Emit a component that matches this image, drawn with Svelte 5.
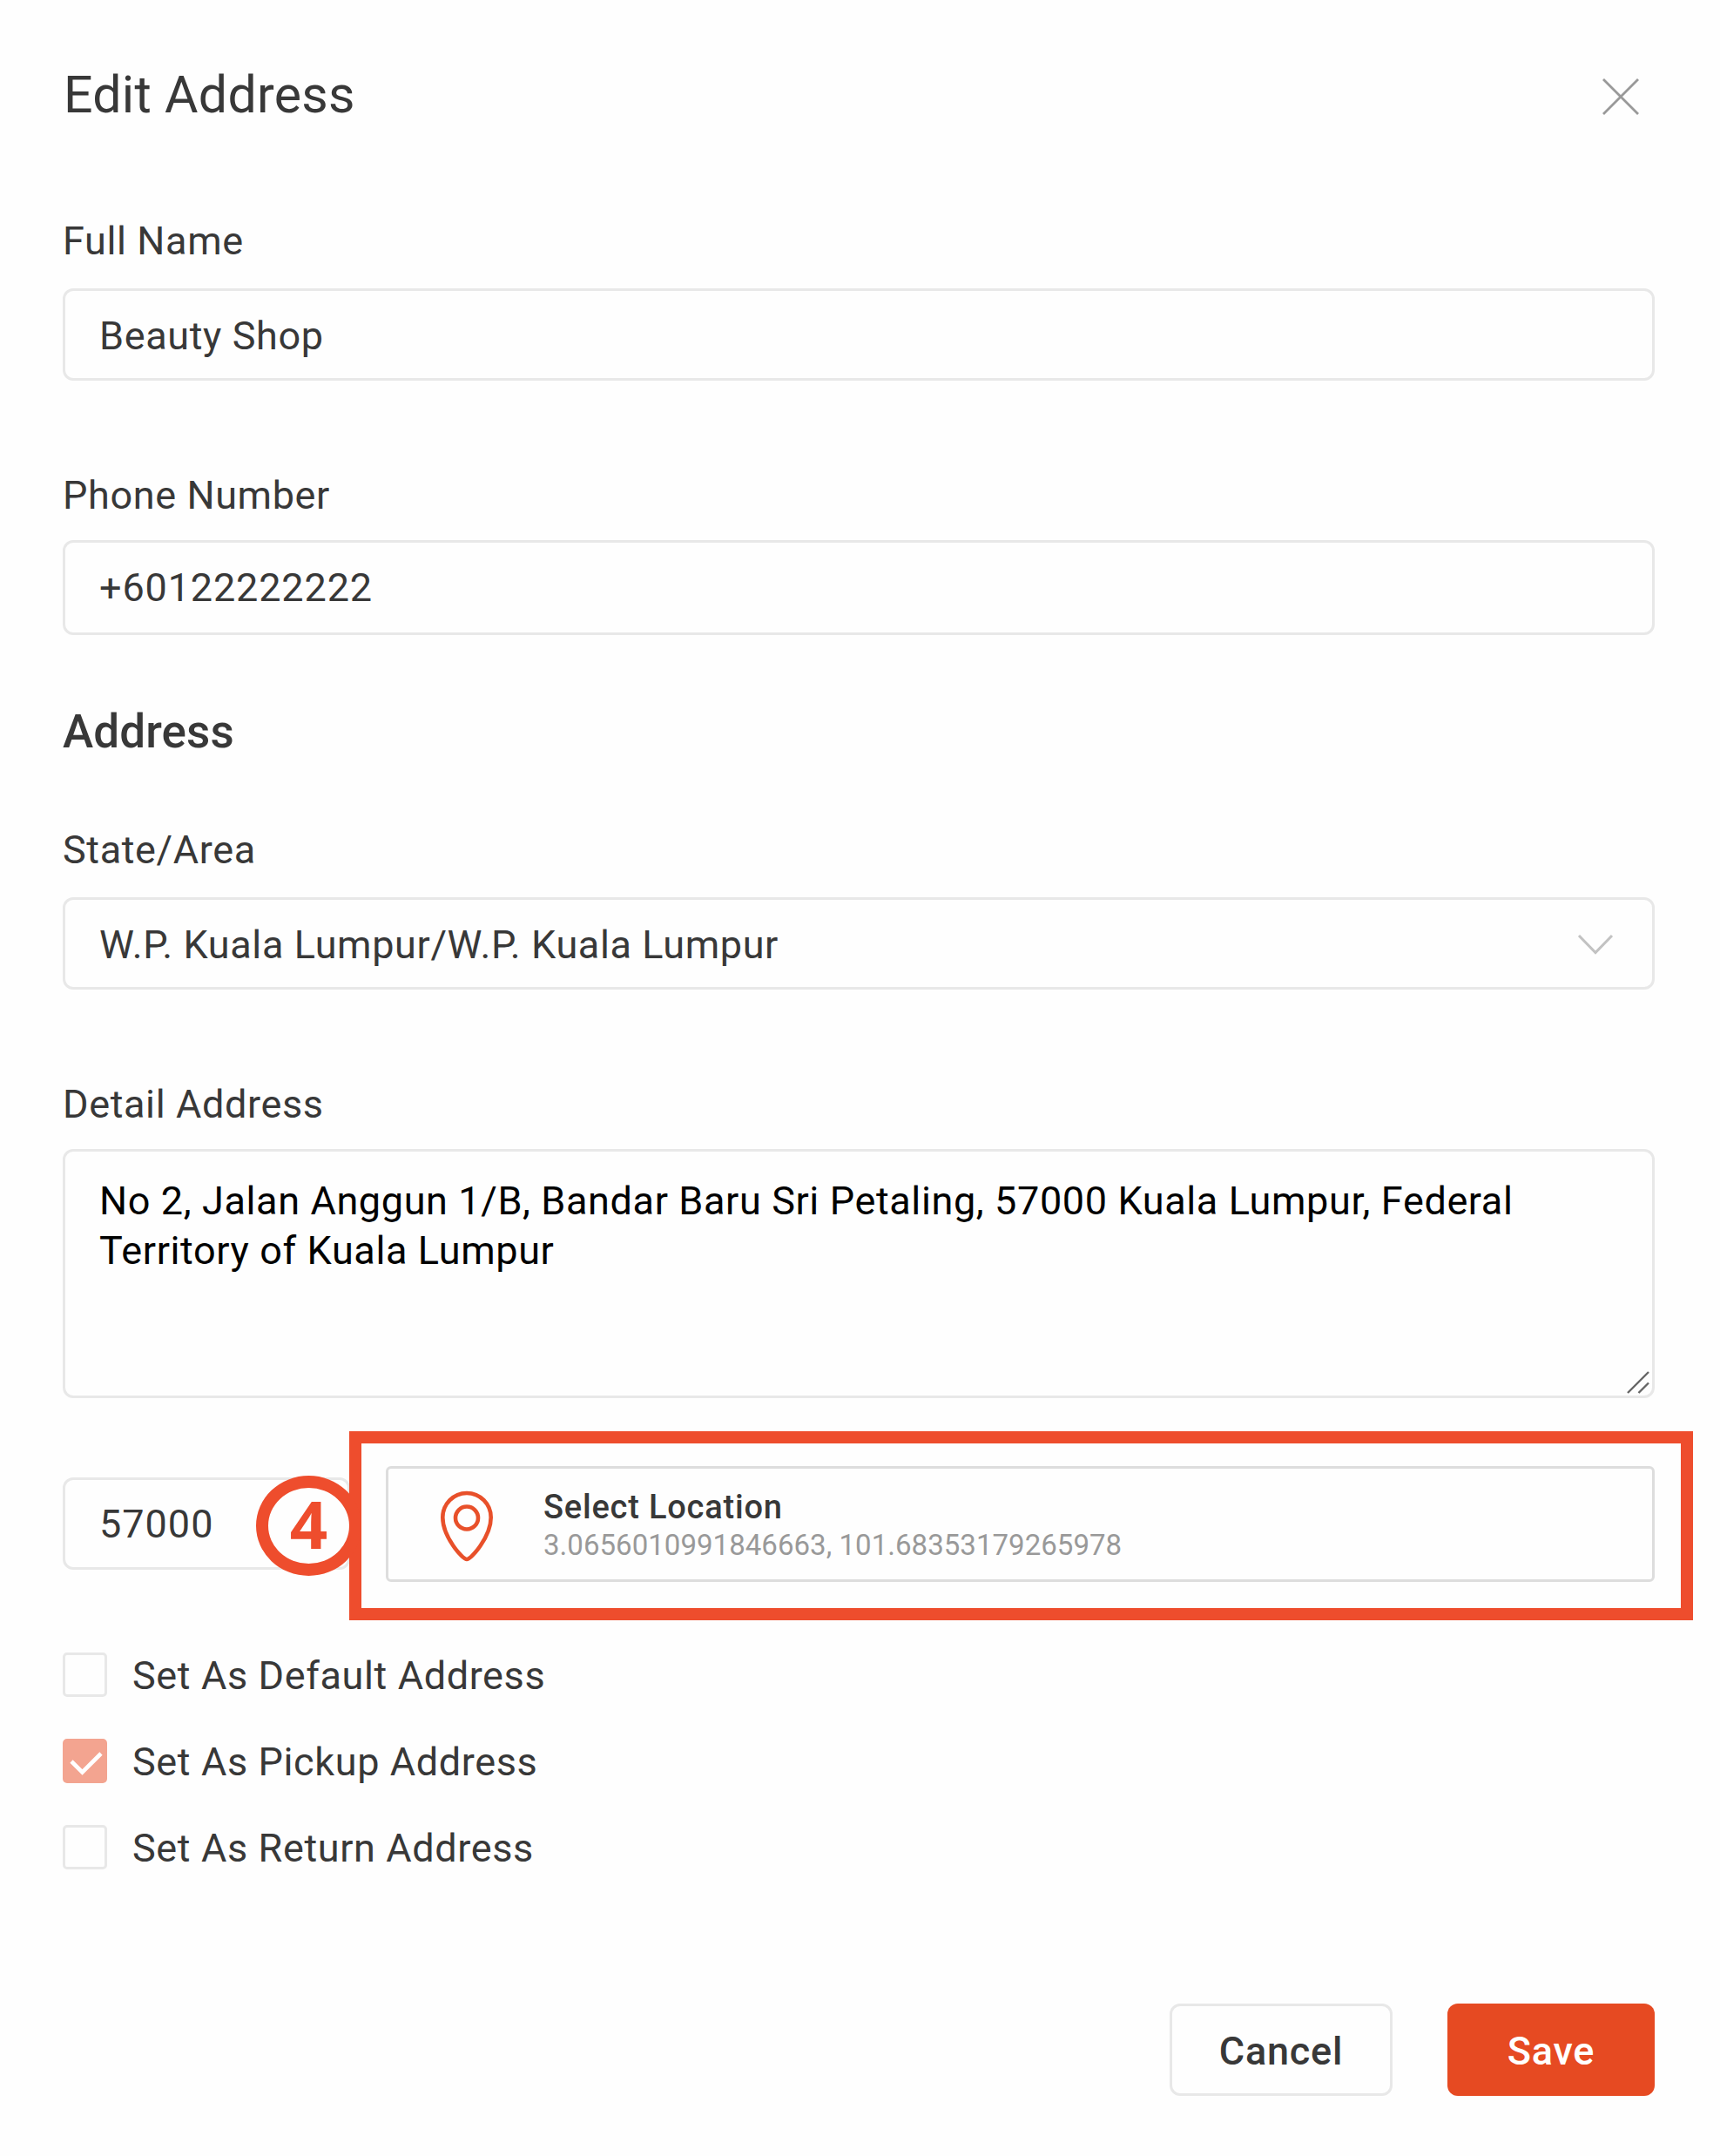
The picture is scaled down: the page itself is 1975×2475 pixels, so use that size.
<script>
  let fullName = $state('Beauty Shop');
  let phone = $state('+60122222222');
  let area = $state('W.P. Kuala Lumpur/W.P. Kuala Lumpur');
  let detail = $state('No 2, Jalan Anggun 1/B, Bandar Baru Sri Petaling, 57000 Kuala Lumpur, Federal Territory of Kuala Lumpur');
  let postcode = $state('57000');

  let options = $state([
    { label: 'Set As Default Address', checked: false },
    { label: 'Set As Pickup Address', checked: true },
    { label: 'Set As Return Address', checked: false },
  ]);
</script>

<div class="modal">
  <header class="header">
    <h1>Edit Address</h1>
    <button class="close" aria-label="Close">
      <svg width="44" height="44" viewBox="0 0 44 44" fill="none" stroke="#999" stroke-width="2.8">
        <path d="M2 2L42 42M42 2L2 42" />
      </svg>
    </button>
  </header>

  <div class="field name">
    <label for="name">Full Name</label>
    <input id="name" class="box" bind:value={fullName} />
  </div>

  <div class="field phone">
    <label for="phone">Phone Number</label>
    <input id="phone" class="box" bind:value={phone} />
  </div>

  <h2>Address</h2>

  <div class="field area">
    <label for="area">State/Area</label>
    <button id="area" class="box select">
      <span>{area}</span>
      <svg width="42" height="26" viewBox="0 0 42 26" fill="none" stroke="#c2c2c2" stroke-width="3">
        <path d="M2 3L21 22.500L40 3" />
      </svg>
    </button>
  </div>

  <div class="field detail">
    <label for="detail">Detail Address</label>
    <div class="textarea-wrap">
      <textarea id="detail" class="box" spellcheck="false" bind:value={detail}></textarea>
      <svg class="grip" width="26" height="26" viewBox="0 0 26 26" fill="none" stroke="#666" stroke-width="2.4">
        <path d="M1 25L25 1M13.5 25L25 13.5" />
      </svg>
    </div>
  </div>

  <div class="location-row">
    <input class="box postcode" aria-label="Postcode" bind:value={postcode} />
    <button class="location">
      <svg width="62" height="82" viewBox="0 0 62 82" fill="none" stroke="#e8502a" stroke-width="4.6">
        <path d="M31 79C26 79 3.300 53 3.300 31A27.700 28 0 0 1 58.700 31C58.700 53 36 79 31 79Z" />
        <circle cx="31" cy="31.500" r="13" />
      </svg>
      <span class="location-text">
        <span class="location-title">Select Location</span>
        <span class="coords">3.0656010991846663, 101.68353179265978</span>
      </span>
    </button>
    <div class="highlight"></div>
    <div class="step">4</div>
  </div>

  <div class="options">
    {#each options as option}
      <label class="option">
        <input type="checkbox" bind:checked={option.checked} />
        <span class="check" class:checked={option.checked}>
          {#if option.checked}
            <svg width="51" height="51" viewBox="0 0 51 51" fill="none" stroke="#fff" stroke-width="4.6">
              <path d="M10 26L22.500 38.500L44 17" />
            </svg>
          {/if}
        </span>
        <span class="option-label">{option.label}</span>
      </label>
    {/each}
  </div>

  <footer class="footer">
    <button class="btn cancel">Cancel</button>
    <button class="btn save">Save</button>
  </footer>
</div>

<style>
  :global(body) {
    background: #fefefe;
  }

  .modal {
    width: 1975px;
    height: 2475px;
    padding: 79px 75px 0 72px;
    box-sizing: border-box;
    overflow: hidden;
    font-family: Roboto, "Liberation Sans", sans-serif;
    font-size: 45px;
    letter-spacing: 0.62px;
    color: #383838;
    background: #fefefe;
  }

  button, input, textarea {
    margin: 0;
    font: inherit;
    letter-spacing: inherit;
    color: inherit;
    outline: none;
  }

  button {
    padding: 0;
    border: none;
    background: none;
    text-align: left;
  }

  svg {
    display: block;
    flex: none;
  }

  .header {
    display: flex;
    justify-content: space-between;
    align-items: flex-start;
    height: 171px;
  }

  .close {
    margin: 10px 17px 0 0;
  }

  h1 {
    margin: 0;
    padding-left: 1px;
    font-size: 59px;
    line-height: 60px;
    font-weight: 400;
    letter-spacing: 0.3px;
  }

  h2 {
    margin: 81px 0 79px;
    font-size: 53px;
    line-height: 60px;
    font-weight: 500;
    letter-spacing: 0.1px;
  }

  .field {
    display: flex;
    flex-direction: column;
  }

  .field label {
    line-height: 54px;
    margin-bottom: 27px;
  }

  .box {
    width: 100%;
    height: 106px;
    padding: 2px 39px 0;
    box-sizing: border-box;
    border: 3px solid #e8e8e8;
    border-radius: 12px;
    background: #fefefe;
  }

  .phone {
    margin-top: 105px;
  }

  .phone label {
    margin-bottom: 24px;
  }

  .phone .box {
    height: 109px;
    padding-top: 0;
    letter-spacing: 0.85px;
  }

  .select {
    display: flex;
    align-items: center;
    justify-content: space-between;
  }

  .select svg {
    margin-right: 5px;
  }

  .detail {
    margin-top: 105px;
  }

  .detail label {
    margin-bottom: 24px;
  }

  .textarea-wrap {
    position: relative;
    height: 286px;
  }

  textarea.box {
    display: block;
    height: 286px;
    padding-top: 28px;
    line-height: 57px;
    color: #000;
    resize: none;
    overflow: hidden;
  }

  .grip {
    position: absolute;
    right: 6px;
    bottom: 5px;
  }

  .location-row {
    position: relative;
    display: flex;
    align-items: center;
    gap: 41px;
    height: 132px;
    margin-top: 78px;
  }

  .postcode {
    width: 330px;
    padding-top: 0;
    letter-spacing: 1px;
  }

  .location {
    display: flex;
    align-items: center;
    flex: 1;
    height: 133px;
    padding: 5px 59px 0;
    gap: 57px;
    box-sizing: border-box;
    border: 3px solid #ddd;
    border-radius: 6px;
    background: #fefefe;
  }

  .location-text {
    display: flex;
    flex-direction: column;
  }

  .location-title {
    font-size: 38px;
    line-height: 44px;
    font-weight: 500;
    letter-spacing: 0.8px;
  }

  .coords {
    font-size: 33px;
    line-height: 44px;
    letter-spacing: 0.04px;
    color: #999;
  }

  /* callout drawn over the location card */
  .highlight {
    position: absolute;
    left: 329px;
    top: -40px;
    width: 1543px;
    height: 217px;
    box-sizing: border-box;
    border: 14px solid #ee4d2d;
  }

  .step {
    position: absolute;
    left: 222px;
    top: 11px;
    width: 121px;
    height: 115px;
    padding-bottom: 5px;
    display: flex;
    align-items: center;
    justify-content: center;
    box-sizing: border-box;
    border: 14px solid #ee4d2d;
    border-radius: 50%;
    background: #fefefe;
    color: #ee4d2d;
    font-family: "Open Sans", "Noto Sans", sans-serif;
    font-size: 76px;
    line-height: 76px;
    font-weight: 700;
    letter-spacing: 0;
  }

  .options {
    display: flex;
    flex-direction: column;
    gap: 48px;
    margin-top: 82px;
  }

  .option {
    display: flex;
    align-items: center;
    gap: 29px;
    height: 51px;
    line-height: 54px;
  }

  .option input {
    display: none;
  }

  .option-label {
    padding-top: 2px;
  }

  .check {
    width: 51px;
    height: 51px;
    box-sizing: border-box;
    border: 3px solid #e8e8e8;
    border-radius: 5px;
    background: #fefefe;
  }

  .check.checked {
    border: none;
    background: #f3a490;
  }

  .footer {
    display: flex;
    justify-content: flex-end;
    gap: 63px;
    margin-top: 154px;
  }

  .btn {
    height: 106px;
    padding-top: 2px;
    box-sizing: border-box;
    border-radius: 12px;
    font-weight: 500;
    letter-spacing: 0.8px;
    text-align: center;
  }

  .cancel {
    width: 256px;
    border: 3px solid #e8e8e8;
    background: #fefefe;
  }

  .save {
    width: 238px;
    background: #e64a22;
    color: #fff;
  }
</style>
